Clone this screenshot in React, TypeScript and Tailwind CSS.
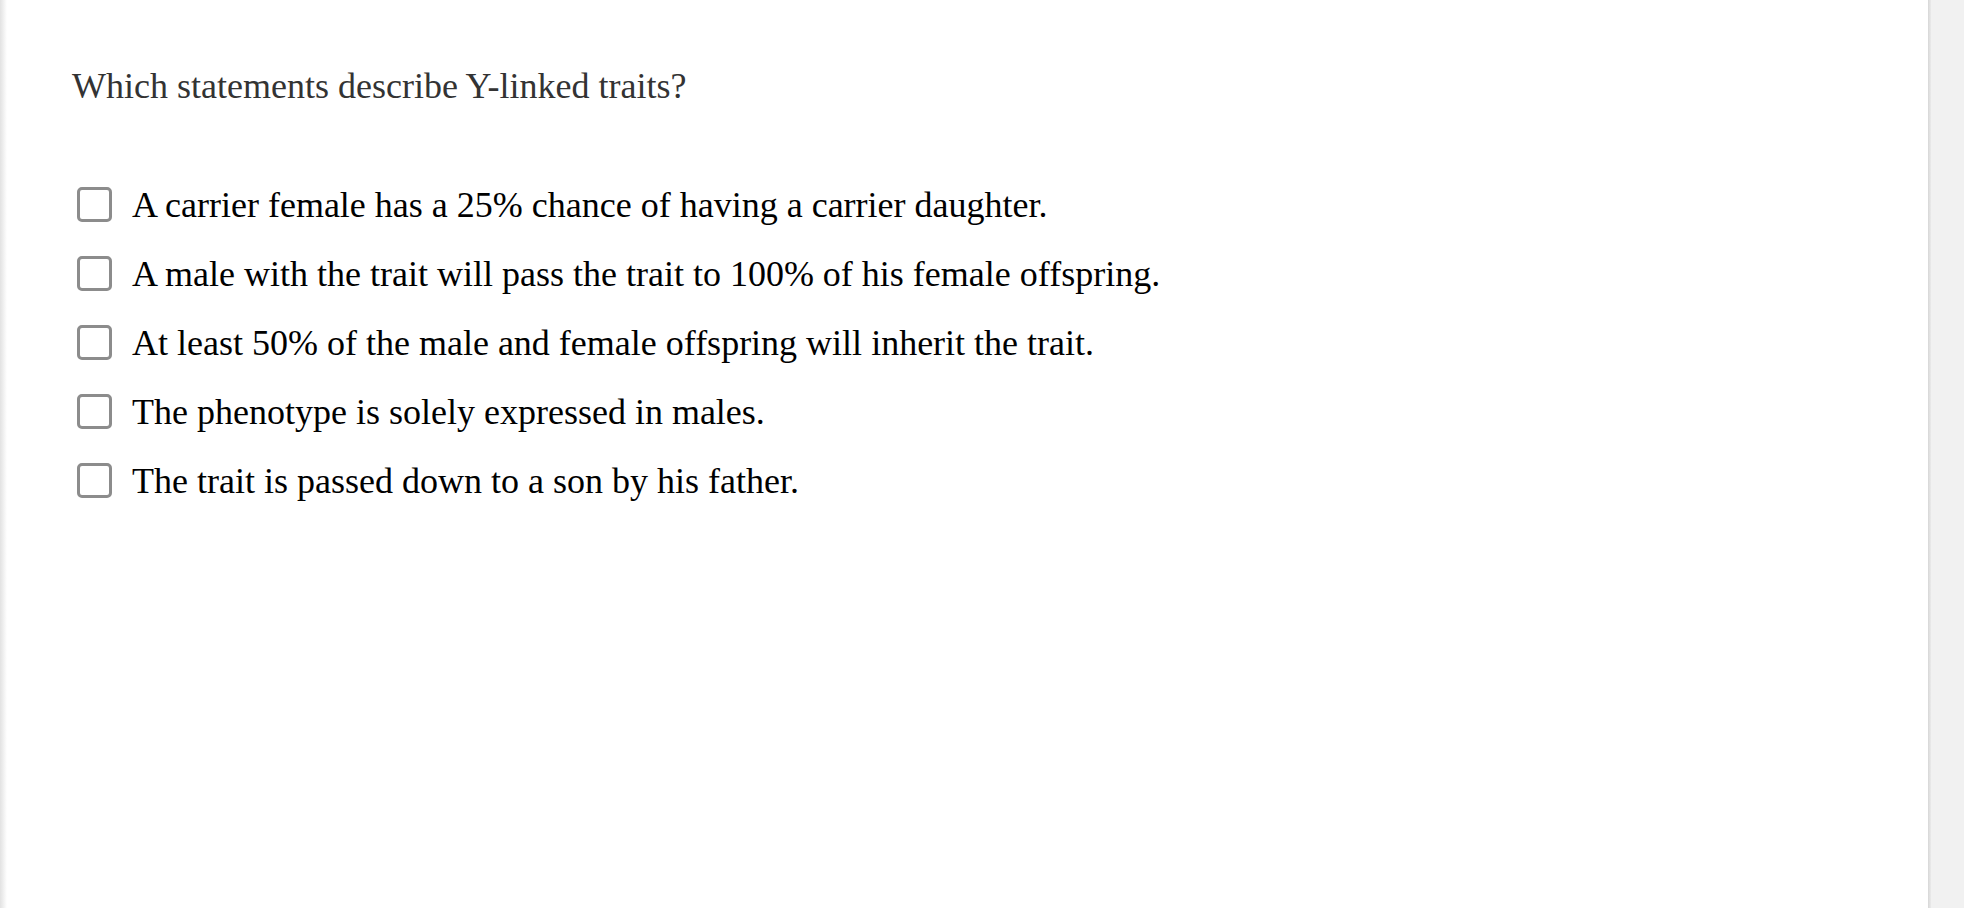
import { useState } from 'react';

const options = [
  'A carrier female has a 25% chance of having a carrier daughter.',
  'A male with the trait will pass the trait to 100% of his female offspring.',
  'At least 50% of the male and female offspring will inherit the trait.',
  'The phenotype is solely expressed in males.',
  'The trait is passed down to a son by his father.',
];

function Option({ label, checked, onToggle }: { label: string; checked: boolean; onToggle: () => void }) {
  return (
    <label className="flex h-[69px] cursor-pointer items-center gap-5">
      <span
        onClick={onToggle}
        className="ml-[5px] flex h-[35px] w-[35px] shrink-0 items-center justify-center rounded-[5px] border-[3px] border-[#8c8c8c] bg-white"
      >
        {checked && (
          <svg viewBox="0 0 16 16" className="h-6 w-6 text-[#333]">
            <path d="M3 8.5l3 3 7-7" fill="none" stroke="currentColor" strokeWidth="2" />
          </svg>
        )}
      </span>
      <span className="text-[36px] leading-[40px] text-black">{label}</span>
    </label>
  );
}

export default function App() {
  const [picked, setPicked] = useState<number[]>([]);

  const toggle = (i: number) =>
    setPicked((p) => (p.includes(i) ? p.filter((x) => x !== i) : [...p, i]));

  return (
    <div className="flex min-h-screen bg-[#f1f1f1] font-['Liberation_Serif',serif]">
      {/* shadow on the left edge */}
      <div className="w-[7px] shrink-0 bg-gradient-to-r from-[#e2e2e2] to-white" />

      <main className="w-[1921px] shrink-0 bg-white pl-[65px] pt-[66px]">
        <h2 className="text-[36px] leading-[40px] text-[#333]">Which statements describe Y-linked traits?</h2>

        <div className="mt-[64px] flex flex-col">
          {options.map((o, i) => (
            <Option key={o} label={o} checked={picked.includes(i)} onToggle={() => toggle(i)} />
          ))}
        </div>
      </main>

      {/* panel border + gutter */}
      <div className="w-[3px] shrink-0 bg-gradient-to-r from-[#d6d6d6] to-[#ebebeb]" />
      <div className="flex-1" />
    </div>
  );
}
